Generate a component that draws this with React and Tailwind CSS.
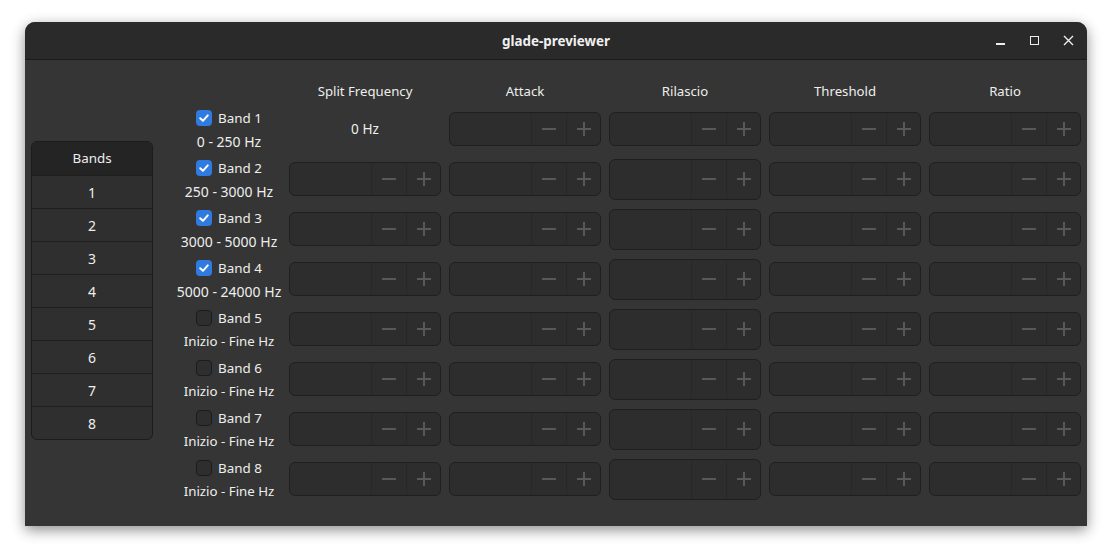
import React from "react";

const bands = [
  { name: "Band 1", range: "0 - 250 Hz", checked: true, num: true },
  { name: "Band 2", range: "250 - 3000 Hz", checked: true, num: true },
  { name: "Band 3", range: "3000 - 5000 Hz", checked: true, num: true },
  { name: "Band 4", range: "5000 - 24000 Hz", checked: true, num: true },
  { name: "Band 5", range: "Inizio - Fine Hz", checked: false },
  { name: "Band 6", range: "Inizio - Fine Hz", checked: false },
  { name: "Band 7", range: "Inizio - Fine Hz", checked: false },
  { name: "Band 8", range: "Inizio - Fine Hz", checked: false },
];

const headers = ["Split Frequency", "Attack", "Rilascio", "Threshold", "Ratio"];

function Check({ checked }) {
  if (checked) {
    return (
      <span className="flex h-[16px] w-[16px] items-center justify-center rounded-[4px] bg-[#2f7be0]">
        <svg width="12" height="12" viewBox="0 0 12 12">
          <path d="M2.2 6.3 L4.9 8.8 L9.8 3.4" fill="none" stroke="#ffffff" strokeWidth="2" strokeLinecap="round" strokeLinejoin="round" />
        </svg>
      </span>
    );
  }
  return <span className="block h-[16px] w-[16px] rounded-[4px] border border-[#1c1c1c] bg-[#2e2e2e]" />;
}

function Spin({ tall }) {
  return (
    <div className={`flex w-[152px] ${tall ? "h-[41px]" : "h-[34px]"} rounded-[6px] border border-[#1f1f1f] bg-[#2d2d2d] overflow-hidden`}>
      <div className="w-[81px]" />
      <div className="flex w-[35px] items-center justify-center border-l border-[#282828]">
        <svg width="16" height="16" viewBox="0 0 16 16">
          <path d="M1 8 H15" stroke="#585858" strokeWidth="2" />
        </svg>
      </div>
      <div className="flex flex-1 items-center justify-center border-l border-[#282828]">
        <svg width="16" height="16" viewBox="0 0 16 16">
          <path d="M1 8 H15 M8 1 V15" stroke="#585858" strokeWidth="2" />
        </svg>
      </div>
    </div>
  );
}

export default function App() {
  return (
    <div
      className="h-[554px] w-[1112px] bg-white pl-[25px] pt-[22px]"
      style={{ fontFamily: '"Noto Sans", "Open Sans", sans-serif' }}
    >
      <div className="flex h-[504px] w-[1062px] flex-col rounded-t-[10px] bg-[#353535] text-[14px] text-[#eeeeec] shadow-[0_4px_14px_rgba(0,0,0,0.45)]">
        {/* title bar */}
        <div className="relative flex h-[38px] items-center justify-center rounded-t-[10px] border-b border-[#1b1b1b] bg-[#2a2a2a]">
          <span className="mt-[2px] font-bold text-[13.4px] text-[#f0f0f0]">glade-previewer</span>
          <div className="absolute right-[2px] top-0 flex h-full items-center">
            <div className="flex h-full w-[34px] items-center justify-center">
              <div className="mt-[7px] h-[1.5px] w-[9px] bg-[#eeeeec]" />
            </div>
            <div className="flex h-full w-[34px] items-center justify-center">
              <div className="h-[9px] w-[9px] border-[1.5px] border-[#eeeeec]" />
            </div>
            <div className="flex h-full w-[34px] items-center justify-center">
              <svg width="11" height="11" viewBox="0 0 11 11">
                <path d="M1 1 L10 10 M10 1 L1 10" stroke="#eeeeec" strokeWidth="1.4" />
              </svg>
            </div>
          </div>
        </div>

        {/* body */}
        <div className="flex flex-1 pl-[6px] pr-[6px]">
          {/* sidebar */}
          <div className="mt-[81px] w-[122px] self-start">
            <div className="overflow-hidden rounded-[6px] border border-[#1c1c1c] bg-[#2f2f2f]">
              <div className="flex h-[33px] items-center justify-center bg-[#242424] text-[13.4px]">Bands</div>
              {[1, 2, 3, 4, 5, 6, 7, 8].map((n) => (
                <div key={n} className="flex h-[33px] items-center justify-center border-t border-[#1f1f1f]">
                  {n}
                </div>
              ))}
            </div>
          </div>

          {/* grid */}
          <div className="ml-[24px] flex flex-col pt-[21px]">
            <div className="flex h-[22px] items-center gap-[8px] text-[13.2px]">
              <div className="w-[104px]" />
              {headers.map((h) => (
                <div key={h} className="w-[152px] text-center">
                  {h}
                </div>
              ))}
            </div>
            <div className="mt-[1px] flex flex-col">
              {bands.map((b, i) => (
                <div key={b.name} className="flex h-[50px] items-center gap-[8px]">
                  <div className="mt-[2px] flex w-[104px] flex-col items-center">
                    <div className="flex h-[23px] items-center gap-[6px]">
                      <span className="-mt-[1px]">
                        <Check checked={b.checked} />
                      </span>
                      <span className="text-[13.4px]">{b.name}</span>
                    </div>
                    <div className={`flex h-[23px] items-center whitespace-nowrap ${b.num ? "text-[14px]" : "text-[13.3px]"}`}>
                      {b.range}
                    </div>
                  </div>
                  {i === 0 ? (
                    <div className="flex w-[152px] justify-center text-[13.6px]">0 Hz</div>
                  ) : (
                    <Spin />
                  )}
                  <Spin />
                  <Spin tall={i !== 0} />
                  <Spin />
                  <Spin />
                </div>
              ))}
            </div>
          </div>
        </div>
      </div>
    </div>
  );
}
